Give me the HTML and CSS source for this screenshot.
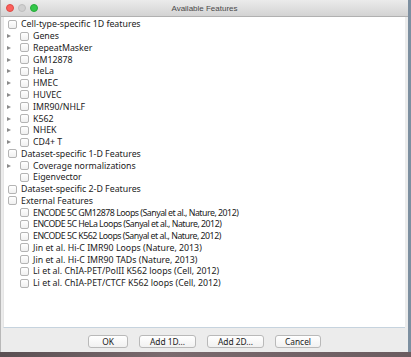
FILE: index.html
```html
<!DOCTYPE html>
<html>
<head>
<meta charset="utf-8">
<link rel="stylesheet" href="styles.css">
</head>
<body>
<div class="desk">
  <div class="win">
    <div class="titlebar">
      <div class="lights"><span class="dot red"></span><span class="dot gray"></span><span class="dot green"></span></div>
      <div class="title">Available Features</div>
    </div>
    <div class="list">
      <div class="row l0"><span class="cb"></span><span class="t">Cell-type-specific 1D features</span></div>
      <div class="row l1"><span class="tri"></span><span class="cb"></span><span class="t">Genes</span></div>
      <div class="row l1"><span class="tri"></span><span class="cb"></span><span class="t">RepeatMasker</span></div>
      <div class="row l1"><span class="tri"></span><span class="cb"></span><span class="t">GM12878</span></div>
      <div class="row l1"><span class="tri"></span><span class="cb"></span><span class="t">HeLa</span></div>
      <div class="row l1"><span class="tri"></span><span class="cb"></span><span class="t">HMEC</span></div>
      <div class="row l1"><span class="tri"></span><span class="cb"></span><span class="t">HUVEC</span></div>
      <div class="row l1"><span class="tri"></span><span class="cb"></span><span class="t">IMR90/NHLF</span></div>
      <div class="row l1"><span class="tri"></span><span class="cb"></span><span class="t">K562</span></div>
      <div class="row l1"><span class="tri"></span><span class="cb"></span><span class="t">NHEK</span></div>
      <div class="row l1"><span class="tri"></span><span class="cb"></span><span class="t">CD4+ T</span></div>
      <div class="row l0"><span class="cb"></span><span class="t">Dataset-specific 1-D Features</span></div>
      <div class="row l1"><span class="tri"></span><span class="cb"></span><span class="t">Coverage normalizations</span></div>
      <div class="row l1"><span class="notri"></span><span class="cb"></span><span class="t">Eigenvector</span></div>
      <div class="row l0"><span class="cb"></span><span class="t">Dataset-specific 2-D Features</span></div>
      <div class="row l0"><span class="cb"></span><span class="t">External Features</span></div>
      <div class="row l1 tight"><span class="notri"></span><span class="cb"></span><span class="t">ENCODE 5C GM12878 Loops (Sanyal et al., Nature, 2012)</span></div>
      <div class="row l1 tight"><span class="notri"></span><span class="cb"></span><span class="t">ENCODE 5C HeLa Loops (Sanyal et al., Nature, 2012)</span></div>
      <div class="row l1 tight"><span class="notri"></span><span class="cb"></span><span class="t">ENCODE 5C K562 Loops (Sanyal et al., Nature, 2012)</span></div>
      <div class="row l1"><span class="notri"></span><span class="cb"></span><span class="t">Jin et al. Hi-C IMR90 Loops (Nature, 2013)</span></div>
      <div class="row l1"><span class="notri"></span><span class="cb"></span><span class="t">Jin et al. Hi-C IMR90 TADs (Nature, 2013)</span></div>
      <div class="row l1"><span class="notri"></span><span class="cb"></span><span class="t">Li et al. ChIA-PET/PolII K562 loops (Cell, 2012)</span></div>
      <div class="row l1"><span class="notri"></span><span class="cb"></span><span class="t">Li et al. ChIA-PET/CTCF K562 loops (Cell, 2012)</span></div>
    </div>
    <div class="buttons">
      <button class="btn b-ok">OK</button>
      <button class="btn b-add1">Add 1D...</button>
      <button class="btn b-add2">Add 2D...</button>
      <button class="btn b-cancel">Cancel</button>
    </div>
  </div>
  <div class="edge"></div>
</div>
<div class="under"></div>
</body>
</html>
```
FILE: styles.css
```css
html, body { margin: 0; padding: 0; }
body {
  width: 411px; height: 357px; overflow: hidden;
  background: #6f6262;
  font-family: "Noto Sans", sans-serif;
  display: flex; flex-direction: column;
}
.desk { display: flex; height: 352px; }
.win {
  width: 408px; height: 352px;
  background: #ececec;
  display: flex; flex-direction: column;
  border-left: 1px solid #b8b8b8;
  box-sizing: border-box;
}
.edge { width: 3px; background: #7d8fa0; }
.under { flex: 1; background: linear-gradient(90deg, #5a4f52, #7a6a6e 40%, #6b5c60); }
.titlebar {
  height: 17px; flex: none;
  background: linear-gradient(#ebebeb, #d3d3d3);
  border-bottom: 1px solid #b1b1b1;
  box-sizing: border-box;
  position: relative;
  display: flex; align-items: center; justify-content: center;
}
.lights { position: absolute; left: 5px; top: 4px; display: flex; gap: 4px; }
.dot { width: 8px; height: 8px; border-radius: 50%; box-sizing: border-box; }
.red { background: #fc605c; border: 0.5px solid #de4a45; }
.gray { background: #d0d0d0; border: 0.5px solid #bdbdbd; }
.green { background: #34c84a; border: 0.5px solid #27a93a; }
.title { font-size: 8px; color: #4a4a4a; font-family: "Liberation Sans", sans-serif; }
.list {
  flex: none; height: 311px;
  margin: 0 3px 0 2px;
  background: #fff;
  border-bottom: 1px solid #c6d3de;
  border-left: 1px solid #e6e6e6;
  padding-top: 1.5px;
  box-sizing: border-box;
}
.row {
  height: 11.77px; display: flex; align-items: center;
  font-size: 8.8px; color: #222;
  white-space: nowrap;
}
.tight .t { letter-spacing: -0.5px; }
.l0 { padding-left: 4px; }
.l1 { padding-left: 3px; }
.tri, .notri { width: 0; height: 0; }
.tri {
  border-left: 4px solid #8a8a8a;
  border-top: 2.5px solid transparent;
  border-bottom: 2.5px solid transparent;
  margin-right: 9px;
}
.notri { margin-left: 4px; margin-right: 9px; }
.cb {
  width: 9px; height: 9px; box-sizing: border-box;
  border: 1px solid #b4b4b4; border-radius: 2px;
  background: linear-gradient(#ffffff, #f0f0f0);
  margin-right: 4px; flex: none;
}
.buttons {
  flex: 1; display: flex; justify-content: center; align-items: center;
  gap: 11px; padding-top: 2px;
}
.btn {
  height: 13px; padding: 0; margin: 0;
  font-family: "Noto Sans", sans-serif; font-size: 8.4px; color: #222;
  background: linear-gradient(#ffffff, #f1f1f1);
  border: 1px solid #b9b9b9; border-radius: 3px;
  line-height: 11px;
}
.b-ok { width: 40px; }
.b-add1 { width: 57px; }
.b-add2 { width: 57px; }
.b-cancel { width: 46px; }
```
